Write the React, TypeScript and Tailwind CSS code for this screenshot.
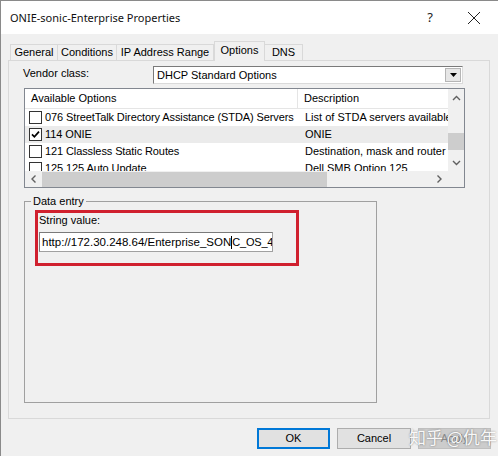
import React from "react";

type Dir = "up" | "down" | "left" | "right";

function Chevron({ dir }: { dir: Dir }) {
  const rot = dir === "up" ? "" : dir === "down" ? "rotate-180" : dir === "left" ? "-rotate-90" : "rotate-90";
  return (
    <svg width="9" height="6" viewBox="0 0 9 6" className={rot}>
      <path d="M1 5 L4.5 1.5 L8 5" fill="none" stroke="#606060" strokeWidth="1.4" />
    </svg>
  );
}

function Check({ checked }: { checked?: boolean }) {
  return (
    <span className="w-[13px] h-[13px] border border-[#333333] bg-white flex items-center justify-center shrink-0">
      {checked && (
        <svg width="9" height="9" viewBox="0 0 9 9">
          <path d="M1 4.3 L3.4 6.8 L8 1.6" fill="none" stroke="#000" strokeWidth="1.7" />
        </svg>
      )}
    </span>
  );
}

const rows = [
  { checked: false, name: "076 StreetTalk Directory Assistance (STDA) Servers", desc: "List of STDA servers available" },
  { checked: true, name: "114 ONIE", desc: "ONIE", selected: true },
  { checked: false, name: "121 Classless Static Routes", desc: "Destination, mask and router IP addresses" },
  { checked: false, name: "125 125 Auto Update", desc: "Dell SMB Option 125" },
];

const tabs = [
  { label: "General", w: "w-[48px]" },
  { label: "Conditions", w: "w-[60px]" },
  { label: "IP Address Range", w: "w-[98px]" },
  { label: "Options", w: "w-[51px]", active: true },
  { label: "DNS", w: "w-[39px]" },
];

export default function App() {
  return (
    <div className="relative w-[498px] h-[456px] overflow-hidden bg-[#f0f0f0] border-l border-t border-[#8a8a8a] font-['Liberation_Sans',Arial,sans-serif] text-[11px] leading-[13px] text-black">
      {/* title bar */}
      <div className="h-[33px] bg-white flex items-center pl-[9px] pr-[17px]">
        <span className="font-['Noto_Sans',sans-serif] text-[11px] text-[#111]">ONIE-sonic-Enterprise Properties</span>
        <span className="ml-auto font-['Noto_Sans',sans-serif] text-[13px] text-[#222]">?</span>
        <svg width="14" height="14" viewBox="0 0 14 14" className="ml-[34px]">
          <path d="M1 1 L13 13 M13 1 L1 13" stroke="#222" strokeWidth="1" />
        </svg>
      </div>

      {/* tabs */}
      <div className="mt-[7px] ml-[9px] flex items-end h-[19px] relative z-10">
        {tabs.map((t) =>
          t.active ? (
            <div
              key={t.label}
              className={`${t.w} h-[20px] -mb-px bg-[#f0f0f0] border border-b-0 border-[#d9d9d9] flex items-center justify-center pb-[2px]`}
            >
              {t.label}
            </div>
          ) : (
            <div
              key={t.label}
              className={`${t.w} h-[16px] bg-[#f0f0f0] border border-b-0 border-[#d9d9d9] -ml-px first:ml-0 flex items-center justify-center`}
            >
              {t.label}
            </div>
          )
        )}
      </div>

      {/* panel */}
      <div className="ml-[7px] w-[482px] h-[359px] border border-[#d9d9d9] bg-[#f0f0f0] pt-[5px]">
        {/* vendor class */}
        <div className="flex items-center">
          <div className="w-[144px] pl-[14px] -mt-[3px]">Vendor class:</div>
          <div className="w-[310px] h-[18px] bg-white border border-[#7a7a7a] border-b-[#dadada] border-r-[#dadada] flex items-center">
            <span className="pl-[3px] flex-1">DHCP Standard Options</span>
            <span className="w-[16px] h-[14px] mr-px bg-[#e6e6e6] border border-[#b5b5b5] flex items-center justify-center">
              <svg width="7" height="4" viewBox="0 0 7 4">
                <path d="M0 0 L7 0 L3.5 4 Z" fill="#000" />
              </svg>
            </span>
          </div>
        </div>

        {/* list view */}
        <div className="ml-[15px] mt-[4px] w-[441px] h-[100px] border border-[#828790] bg-white flex flex-col">
          <div className="flex h-[82px]">
            <div className="w-[423px] overflow-hidden">
              <div className="w-[600px]">
                <div className="flex h-[20px] border-b border-[#e5e5e5] items-center">
                  <div className="w-[273px] pl-[6px] border-r border-[#e5e5e5] h-full flex items-center">Available Options</div>
                  <div className="pl-[6px]">Description</div>
                </div>
                {rows.map((r) => (
                  <div key={r.name} className={`flex h-[17px] items-center ${r.selected ? "bg-[#ebebeb]" : ""}`}>
                    <div className="w-[273px] pl-[4px] flex items-center gap-[3px] whitespace-nowrap tracking-[-0.1px]">
                      <Check checked={r.checked} />
                      <span>{r.name}</span>
                    </div>
                    <div className="pl-[7px] whitespace-nowrap">{r.desc}</div>
                  </div>
                ))}
              </div>
            </div>
            {/* vertical scrollbar */}
            <div className="w-[16px] bg-[#f0f0f0] flex flex-col">
              <div className="h-[17px] flex items-center justify-center">
                <Chevron dir="up" />
              </div>
              <div className="flex-1 pt-[27px]">
                <div className="h-[17px] bg-[#cdcdcd]" />
              </div>
              <div className="h-[17px] flex items-center justify-center">
                <Chevron dir="down" />
              </div>
            </div>
          </div>
          {/* horizontal scrollbar */}
          <div className="flex h-[16px] bg-[#f0f0f0]">
            <div className="w-[17px] flex items-center justify-center">
              <Chevron dir="left" />
            </div>
            <div className="w-[389px] flex items-center">
              <div className="w-[285px] h-[15px] bg-[#cdcdcd]" />
            </div>
            <div className="w-[17px] flex items-center justify-center">
              <Chevron dir="right" />
            </div>
            <div className="w-[16px]" />
          </div>
        </div>

        {/* data entry group */}
        <fieldset className="ml-[15px] mt-[7px] w-[353px] h-[208px] border border-[#a0a0a0]">
          <legend className="ml-[6px] px-[2px] leading-[13px]">Data entry</legend>
          <div className="ml-[10px] mt-[2px] w-[264px] h-[56px] border-[3px] border-[#d0202e] pt-[1px] pl-px">
            <div>String value:</div>
            <div className="mt-[5px] w-[234px] h-[20px] bg-white border border-[#a0a0a0] border-t-[#7a7a7a] border-l-[#7a7a7a] flex items-center px-[2px] overflow-hidden whitespace-nowrap">
              <span className="text-[11.5px]">http://172.30.248.64/Enterprise_SON</span>
              <span className="w-px h-[13px] bg-black shrink-0" />
              <span className="text-[11px] tracking-[-0.2px]">C_OS_4.1.0</span>
            </div>
          </div>
        </fieldset>
      </div>

      {/* buttons */}
      <div className="relative mt-[9px] ml-[256px] flex gap-[7px]">
        <button className="w-[73px] h-[21px] bg-[#e1e1e1] border-2 border-[#0078d7] flex items-center justify-center">
          OK
        </button>
        <button className="w-[74px] h-[21px] bg-[#e1e1e1] border border-[#adadad] flex items-center justify-center">
          Cancel
        </button>
        <button className="w-[73px] h-[21px] bg-[#cccccc] border border-[#bfbfbf] text-[#8a8a8a] flex items-center justify-center">
          Apply
        </button>
        <span className="absolute left-[152px] -top-[3px] font-['Noto_Sans_CJK_SC',sans-serif] text-[17px] leading-[24px] text-white/95 [text-shadow:0_0_2px_rgba(0,0,0,0.45)] whitespace-nowrap">
          知乎 @仇年
        </span>
      </div>
    </div>
  );
}
